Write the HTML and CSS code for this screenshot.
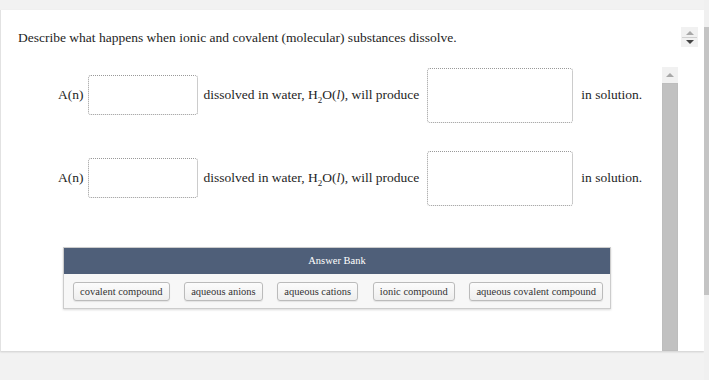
FILE: index.html
```html
<!doctype html>
<html lang="en">
  <head>
    <meta charset="UTF-8" />
    <title>Dissolving substances</title>
    <link rel="stylesheet" href="styles.css">
  </head>
  <body>
    <div class="page">
      <div class="panel">
        <div class="head">
          <p class="question">Describe what happens when ionic and covalent (molecular) substances dissolve.</p>
          <div class="spinner">
            <span class="tri up"></span>
            <span class="sep"></span>
            <span class="tri down"></span>
          </div>
        </div>

        <div class="scroller">
          <div class="content">
            <div class="row">
              <span class="word">A(n)</span>
              <div class="drop small"></div>
              <span class="word">dissolved in water, H<sub>2</sub>O(<i>l</i>), will produce</span>
              <div class="drop big"></div>
              <span class="word">in solution.</span>
            </div>
            <div class="row">
              <span class="word">A(n)</span>
              <div class="drop small"></div>
              <span class="word">dissolved in water, H<sub>2</sub>O(<i>l</i>), will produce</span>
              <div class="drop big"></div>
              <span class="word">in solution.</span>
            </div>

            <div class="bank">
              <div class="bank-title">Answer Bank</div>
              <div class="bank-items">
                <span class="chip">covalent compound</span>
                <span class="chip">aqueous anions</span>
                <span class="chip">aqueous cations</span>
                <span class="chip">ionic compound</span>
                <span class="chip">aqueous covalent compound</span>
              </div>
            </div>
          </div>
          <div class="scrollbar">
            <div class="sb-btn"><span class="tri up"></span></div>
            <div class="sb-thumb"></div>
          </div>
        </div>
      </div>
      <div class="outer-bar">
        <div class="outer-thumb"></div>
      </div>
    </div>
  </body>
</html>
```

FILE: styles.css
```css
body {
  margin: 0;
  background: #f2f2f2;
  font-family: "Liberation Serif", "Times New Roman", serif;
  color: #1e1e1e;
  overflow: hidden;
}
.page {
  display: flex;
  align-items: flex-start;
}
.panel {
  width: 703px;
  height: 341px;
  margin-top: 10px;
  background: white;
  border-left: 1px solid #e2e2e2;
  box-shadow: 0 1px 2px rgba(0, 0, 0, 0.15);
  display: flex;
  flex-direction: column;
}
.head {
  display: flex;
  align-items: flex-start;
  height: 57px;
  padding: 17px 6px 0 17px;
  box-sizing: border-box;
}
.question {
  flex: 1;
  margin: 0;
  font-size: 13.5px;
  line-height: 22px;
}
.spinner {
  width: 17px;
  height: 20px;
  background: #f1f1f1;
  display: flex;
  flex-direction: column;
  align-items: center;
  justify-content: center;
  gap: 2px;
}
.spinner .sep {
  width: 15px;
  height: 1px;
  background: #d0d0d0;
}
.tri {
  width: 0;
  height: 0;
  border-left: 4px solid transparent;
  border-right: 4px solid transparent;
}
.tri.up {
  border-bottom: 4px solid #a8a8a8;
}
.tri.down {
  border-top: 4px solid #444;
}
.scroller {
  flex: 1;
  display: flex;
  margin-right: 26px;
  overflow: hidden;
}
.content {
  flex: 1;
  padding-top: 1px;
}
.row {
  display: flex;
  align-items: center;
  height: 54px;
  padding-left: 57px;
  margin-bottom: 29px;
  font-size: 13.5px;
}
.row sub {
  font-size: 9px;
  line-height: 0;
}
.word {
  white-space: nowrap;
}
.drop {
  border: 1px dotted #999;
  border-radius: 3px;
  box-sizing: border-box;
}
.drop.small {
  width: 110px;
  height: 40px;
  margin: 0 6px 0 4px;
}
.drop.big {
  width: 146px;
  height: 55px;
  margin: 0 8px 0 8px;
}
.bank {
  width: 546px;
  margin: 42px 0 0 62px;
  border: 1px solid #ccc;
  box-shadow: 0 1px 2px rgba(0, 0, 0, 0.15);
  background: #f7f7f7;
}
.bank-title {
  background: #4f5f79;
  color: white;
  text-align: center;
  font-size: 10.5px;
  height: 26px;
  line-height: 26px;
}
.bank-items {
  display: flex;
  justify-content: space-between;
  padding: 8px 7px 7px 9px;
}
.chip {
  font-size: 10.5px;
  color: #333;
  padding: 0 6px;
  height: 19px;
  line-height: 18px;
  box-sizing: border-box;
  border: 1px solid #bbb;
  border-radius: 3px;
  background: linear-gradient(#fcfcfc, #eeeeee);
  box-shadow: 0 1px 1px rgba(0, 0, 0, 0.08);
  white-space: nowrap;
}
.scrollbar {
  width: 16px;
  display: flex;
  flex-direction: column;
}
.sb-btn {
  height: 16px;
  background: #f1f1f1;
  display: flex;
  align-items: center;
  justify-content: center;
}
.sb-thumb {
  flex: 1;
  background: #c1c1c1;
  border: 1px solid #bdbdbd;
}
.outer-bar {
  width: 5px;
  height: 380px;
  background: #f0f0f0;
}
.outer-thumb {
  margin-top: 27px;
  height: 268px;
  background: #c4c4c4;
}
```
